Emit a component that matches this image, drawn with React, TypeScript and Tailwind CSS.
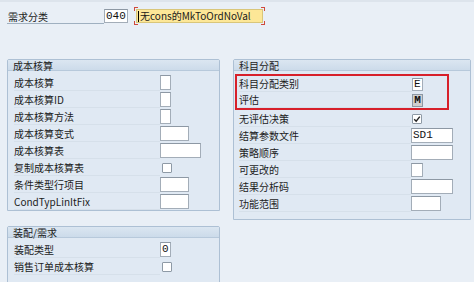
import React from "react";

const Input = ({ w, h = 14, value, mono = true }: { w: number; h?: number; value?: string; mono?: boolean }) => (
  <div
    className="bg-white border border-[#a3adb8] border-t-[#8d98a4] flex items-center pl-[1px] text-[11px] leading-none text-[#111]"
    style={{ width: w, height: h, fontFamily: mono ? '"Liberation Mono", "DejaVu Sans Mono", monospace' : undefined }}
  >
    {value}
  </div>
);

const Check = ({ checked }: { checked?: boolean }) => (
  <div className="w-[10px] h-[10px] bg-white border border-[#8e9aa6] rounded-[1px] flex items-center justify-center">
    {checked && (
      <svg width="8" height="8" viewBox="0 0 8 8">
        <path d="M1.2 4.2 L3.2 6.2 L6.8 1.6" stroke="#222" strokeWidth="1.4" fill="none" />
      </svg>
    )}
  </div>
);

const Row = ({ label, lw, children, h = 17 }: { label: string; lw: number; children?: React.ReactNode; h?: number }) => (
  <div className="flex items-center" style={{ height: h }}>
    <div className="shrink-0 h-full flex items-center border-b border-[#d6e0ea]" style={{ width: lw }}>
      {label}
    </div>
    {children}
  </div>
);

const Panel = ({ title, children, className }: { title: string; children: React.ReactNode; className?: string }) => (
  <div className={"border border-[#adc0d4] bg-[#e0e9f3] rounded-t-[2px] " + (className ?? "")}>
    <div className="h-[11px] bg-gradient-to-b from-[#dbe6f1] to-[#ccdbea] border-b border-[#b7c9db] pl-[5px] leading-[11px] text-[10px] text-[#222]">
      {title}
    </div>
    {children}
  </div>
);

export default function App() {
  return (
    <div
      className="w-[474px] h-[282px] overflow-hidden bg-[#e9eff6] text-[10px] text-[#1c1c1c] border-t-2 border-[#dde4ec]"
      style={{ fontFamily: '"Noto Sans CJK SC", "Noto Sans", sans-serif' }}
    >
      <div className="h-[57px] pt-[7px] pl-[7px] flex items-start">
        <div className="w-[97px] h-[15px] border-b border-[#9fb0c0] leading-[15px] pl-[1px]">需求分类</div>
        <Input w={24} h={14} value="040" />
        <div className="relative ml-[8px] w-[127px] h-[14px] bg-[#fde797] border border-[#d9c67a] flex items-center pl-[1px] text-[10px] leading-none text-[#1a1a1a]">
          <span className="w-[1px] h-[11px] bg-black mr-[1px]" />
          无cons的MkToOrdNoVal
          <span className="absolute -left-[3px] -top-[3px] w-[4px] h-[4px] border-l border-t border-[#d04a3c]" />
          <span className="absolute -right-[3px] -top-[3px] w-[4px] h-[4px] border-r border-t border-[#d04a3c]" />
          <span className="absolute -left-[3px] -bottom-[3px] w-[4px] h-[4px] border-l border-b border-[#d04a3c]" />
          <span className="absolute -right-[3px] -bottom-[3px] w-[4px] h-[4px] border-r border-b border-[#d04a3c]" />
        </div>
      </div>

      <div className="flex items-start gap-[13px] pl-[7px]">
        <div className="w-[213px] flex flex-col gap-[15px]">
          <Panel title="成本核算">
            <div className="pl-[6px] pt-[3px] pb-0">
              <Row label="成本核算" lw={146}><Input w={11} h={15} /></Row>
              <Row label="成本核算ID" lw={146}><Input w={11} h={15} /></Row>
              <Row label="成本核算方法" lw={146}><Input w={11} h={15} /></Row>
              <Row label="成本核算变式" lw={146}><Input w={29} h={15} /></Row>
              <Row label="成本核算表" lw={146}><Input w={41} h={15} /></Row>
              <Row label="复制成本核算表" lw={146}><div className="pl-[2px]"><Check /></div></Row>
              <Row label="条件类型行项目" lw={146}><Input w={29} h={15} /></Row>
              <Row label="CondTypLinItFix" lw={146}><Input w={29} h={15} /></Row>
            </div>
          </Panel>
          <Panel title="装配/需求" className="h-[80px]">
            <div className="pl-[6px] pt-[3px]">
              <Row label="装配类型" lw={146}><Input w={11} h={15} value="0" /></Row>
              <Row label="销售订单成本核算" lw={146}><div className="pl-[2px]"><Check /></div></Row>
            </div>
          </Panel>
        </div>

        <Panel title="科目分配" className="w-[238px]">
          <div className="pt-[3px] pb-[7px]">
            <div className="ml-[1px] w-[214px] border-2 border-[#d7202a] pl-[2px]">
              <Row label="科目分配类别" lw={173} h={16}><Input w={11} h={13} value="E" /></Row>
              <Row label="评估" lw={173} h={16}>
                <div className="w-[11px] h-[13px] bg-[#cfcfcf] border border-[#8d98a4] flex items-center justify-center text-[11px] leading-none font-bold text-[#111]" style={{ fontFamily: '"Liberation Mono", monospace' }}>M</div>
              </Row>
            </div>
            <div className="pl-[5px]">
              <Row label="无评估决策" lw={172}><div className="pl-[1px]"><Check checked /></div></Row>
              <Row label="结算参数文件" lw={172}><Input w={42} h={15} value="SD1" /></Row>
              <Row label="策略顺序" lw={172}><Input w={42} h={15} /></Row>
              <Row label="可更改的" lw={172}><Input w={12} h={14} /></Row>
              <Row label="结果分析码" lw={172}><Input w={42} h={15} /></Row>
              <Row label="功能范围" lw={172}><Input w={30} h={15} /></Row>
            </div>
          </div>
        </Panel>
      </div>
    </div>
  );
}
